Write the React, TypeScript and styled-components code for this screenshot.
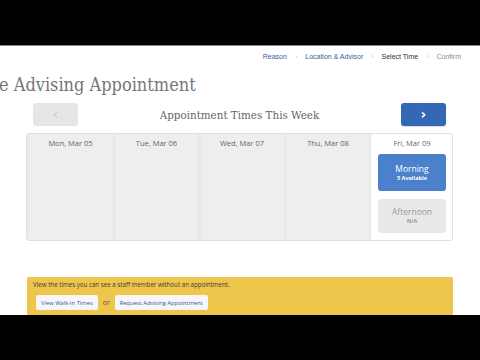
import React from "react"
import styled, { createGlobalStyle } from "styled-components"


const GlobalStyle = createGlobalStyle`
	html, body {
		margin: 0;
		padding: 0;
		background: #000;
	}
	* {
		box-sizing: border-box;
	}
`

const Frame = styled.div`
	width: 480px;
	height: 360px;
	display: flex;
	flex-direction: column;
	background: #000;
	overflow: hidden;
`

const Letterbox = styled.div<{ $top?: boolean }>`
	height: ${p => p.$top ? 46 : 45}px;
	flex-shrink: 0;
	background: #000;
	border-bottom: ${p => p.$top ? "1px solid #8a8a8a" : "none"};
`

const Page = styled.main`
	flex: 1;
	min-height: 0;
	background: #fff;
	overflow: hidden;
`

const Crumbs = styled.nav`
	display: flex;
	justify-content: flex-end;
	align-items: center;
	gap: 8px;
	height: 20px;
	padding: 0 19px 0 0;
	font-family: "Liberation Sans", Arial, sans-serif;
	font-size: 7px;
`

const Crumb = styled.span<{ $state: "done" | "current" | "todo" }>`
	color: ${p => p.$state === "done" ? "#3b5c9c" : p.$state === "current" ? "#333" : "#8a8a8a"};
`

const CrumbSep = styled.span`
	color: #c8c8c8;
	font-size: 7px;
`

const Title = styled.h1`
	margin: 7px 0 0 -1px;
	font-family: "DejaVu Serif", serif;
	font-stretch: condensed;
	font-weight: normal;
	font-size: 18px;
	line-height: 24px;
	color: #767676;
	white-space: nowrap;
`

const Content = styled.section`
	margin: 0 0 0 26px;
	width: 427px;
	display: flex;
	flex-direction: column;
`

const WeekNav = styled.div`
	display: flex;
	align-items: center;
	justify-content: space-between;
	padding: 0 7px;
	margin-top: 6px;
	height: 23px;
`

const NavButton = styled.button<{ $active?: boolean }>`
	width: 45px;
	height: 23px;
	border: none;
	border-radius: 3px;
	padding: 0;
	background: ${p => p.$active ? "#3468b6" : "#e6e6e6"};
	color: ${p => p.$active ? "#fff" : "#cfcfcf"};
	font-family: "DejaVu Sans", sans-serif;
	font-size: 14px;
	font-weight: bold;
	line-height: 23px;
	box-shadow: ${p => p.$active ? "0 1px 1px rgba(0,0,0,0.15)" : "none"};
`

const WeekTitle = styled.h2`
	margin: 0;
	font-family: "DejaVu Serif", serif;
	font-stretch: condensed;
	font-weight: normal;
	font-size: 11.5px;
	color: #666;
`

const Week = styled.div`
	margin-top: 7px;
	height: 108px;
	display: grid;
	grid-template-columns: 86px 85px 86px 86px 1fr;
	border: 1px solid #e0e0e0;
	border-radius: 3px;
	overflow: hidden;
	background: #fff;
`

const Day = styled.div<{ $open?: boolean }>`
	display: flex;
	flex-direction: column;
	align-items: stretch;
	gap: 8px;
	padding: 3px 6px 0 7px;
	background: ${p => p.$open ? "#fff" : "#eeeeee"};
	border-left: 1px solid #e3e3e3;
	box-shadow: ${p => p.$open ? "none" : "inset 2px 0 2px rgba(0,0,0,0.025)"};
	&:first-child {
		border-left: none;
	}
`

const DayLabel = styled.div`
	text-align: center;
	font-family: "Open Sans", sans-serif;
	font-size: 7.5px;
	line-height: 12px;
	color: #666;
	margin-bottom: -3px;
`

const Slot = styled.div<{ $available?: boolean }>`
	height: ${p => p.$available ? 37 : 34}px;
	border-radius: 3px;
	display: flex;
	flex-direction: column;
	align-items: center;
	justify-content: center;
	background: ${p => p.$available ? "#4b80cc" : "#e9e9e9"};
	color: ${p => p.$available ? "#fff" : "#9a9a9a"};
	font-family: "Open Sans", sans-serif;
`

const SlotName = styled.span`
	font-size: 8.5px;
	line-height: 10px;
`

const SlotCount = styled.span`
	font-size: 5.5px;
	line-height: 8px;
	font-weight: bold;
`

const WalkIn = styled.div`
	margin-top: 36px;
	margin-left: 1px;
	background: #eec64c;
	border-radius: 2px;
	padding: 3px 6px 8px;
	font-family: "Open Sans", sans-serif;
`

const WalkInText = styled.p`
	margin: 0;
	font-size: 6.2px;
	line-height: 10px;
	color: #3a3a3a;
`

const WalkInActions = styled.div`
	display: flex;
	align-items: center;
	gap: 5px;
	margin-top: 5px;
	padding-left: 3px;
`

const LinkButton = styled.button`
	height: 15px;
	padding: 0 5px;
	border: none;
	border-radius: 2px;
	background: #f7f7fb;
	color: #3d4f9e;
	font-family: "Open Sans", sans-serif;
	font-size: 5.8px;
`

const Or = styled.span`
	font-size: 7px;
	color: #555;
`

const days = ["Mon, Mar 05", "Tue, Mar 06", "Wed, Mar 07", "Thu, Mar 08"]

function App(): JSX.Element
{
	return (
		<Frame>
			<GlobalStyle />
			<Letterbox $top />
			<Page>
				<Crumbs>
					<Crumb $state="done">Reason</Crumb>
					<CrumbSep>›</CrumbSep>
					<Crumb $state="done">Location &amp; Advisor</Crumb>
					<CrumbSep>›</CrumbSep>
					<Crumb $state="current">Select Time</Crumb>
					<CrumbSep>›</CrumbSep>
					<Crumb $state="todo">Confirm</Crumb>
				</Crumbs>
				<Title>e Advising Appointment</Title>
				<Content>
					<WeekNav>
						<NavButton>‹</NavButton>
						<WeekTitle>Appointment Times This Week</WeekTitle>
						<NavButton $active>›</NavButton>
					</WeekNav>
					<Week>
						{days.map(d => (
							<Day key={d}>
								<DayLabel>{d}</DayLabel>
							</Day>
						))}
						<Day $open>
							<DayLabel>Fri, Mar 09</DayLabel>
							<Slot $available>
								<SlotName>Morning</SlotName>
								<SlotCount>5 Available</SlotCount>
							</Slot>
							<Slot>
								<SlotName>Afternoon</SlotName>
								<SlotCount>N/A</SlotCount>
							</Slot>
						</Day>
					</Week>
					<WalkIn>
						<WalkInText>View the times you can see a staff member without an appointment.</WalkInText>
						<WalkInActions>
							<LinkButton>View Walk-in Times</LinkButton>
							<Or>or</Or>
							<LinkButton>Request Advising Appointment</LinkButton>
						</WalkInActions>
					</WalkIn>
				</Content>
			</Page>
			<Letterbox />
		</Frame>
	)
}


export default App
